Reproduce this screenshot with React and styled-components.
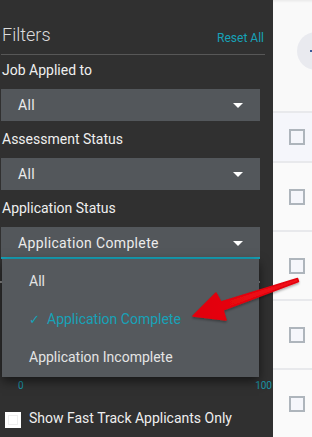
import React from "react";
import styled, { createGlobalStyle } from "styled-components";

const Global = createGlobalStyle`
  html, body { margin: 0; padding: 0; }
  body { font-family: Roboto, "Noto Sans", sans-serif; background: #f8f8f8; }
  * { box-sizing: border-box; }
`;

const Page = styled.div`
  position: relative;
  display: flex;
  width: 312px;
  height: 437px;
  overflow: hidden;
`;

const Sidebar = styled.aside`
  width: 273px;
  flex: none;
  background: #303030;
  padding: 24px 8px 0 1px;
  overflow: hidden;
  display: flex;
  flex-direction: column;
`;

const Header = styled.div`
  display: flex;
  justify-content: space-between;
  align-items: flex-end;
  border-bottom: 1px solid #575757;
  padding: 0 1px 9px 1px;
`;

const Title = styled.h2`
  margin: 0;
  font-size: 18px;
  line-height: 21px;
  font-weight: 300;
  color: #dcdcdc;
`;

const ResetLink = styled.a`
  font-size: 12px;
  line-height: 14px;
  color: #17a2b8;
  text-decoration: none;
`;

const Label = styled.div`
  font-size: 14px;
  line-height: 20px;
  color: #efefef;
  margin: ${(p) => (p.$first ? "5px" : "8px")} 0 9px 1px;
`;

const SelectWrap = styled.div`
  position: relative;
  width: 259px;
`;

const SelectBox = styled.div`
  height: 32px;
  background: #53575b;
  display: flex;
  align-items: center;
  justify-content: space-between;
  padding: 0 17px 0 17px;
  font-size: 14px;
  letter-spacing: 0.35px;
  color: #ececec;
  border-bottom: ${(p) => (p.$open ? "2px solid #17a2b8" : "none")};
  padding-top: ${(p) => (p.$open ? "2px" : "0")};
`;

const Caret = styled.span`
  width: 0;
  height: 0;
  border-left: 5px solid transparent;
  border-right: 5px solid transparent;
  border-top: 5px solid #ffffff;
`;

const Menu = styled.ul`
  position: absolute;
  top: 32px;
  left: 1px;
  right: 1px;
  margin: 0;
  padding: 3px 0 1px;
  list-style: none;
  background: #55595d;
  box-shadow: 0 4px 10px rgba(0, 0, 0, 0.55);
  z-index: 5;
`;

const MenuItem = styled.li`
  height: 38px;
  display: flex;
  align-items: center;
  padding-left: 27px;
  font-size: 14px;
  color: ${(p) => (p.$selected ? "#17a2b8" : "#e4e4e4")};
`;

const Check = styled.span`
  width: 18px;
  font-size: 13px;
`;

const SliderBlock = styled.div`
  margin-top: 22px;
  width: 272px;
  margin-left: -1px;
`;

const Track = styled.div`
  height: 2px;
  width: 260px;
  background: #8a8a8a;
`;

const ChartSpace = styled.div`
  height: 97px;
`;

const Ticks = styled.div`
  display: flex;
  justify-content: space-between;
  padding-left: 18px;
  font-size: 10px;
  line-height: 12px;
  color: #1b95a8;
  white-space: nowrap;
`;

const CheckRow = styled.label`
  display: flex;
  align-items: center;
  gap: 8px;
  margin-top: 20px;
  padding-left: 4px;
  font-size: 14px;
  color: #eeeeee;
`;

const WhiteBox = styled.span`
  width: 16px;
  height: 16px;
  background: #ffffff;
  flex: none;
  position: relative;
  &::after {
    content: "";
    position: absolute;
    inset: 3px;
    border: 1px solid #eeeeee;
  }
`;

const CheckText = styled.span`
  margin-top: -4px;
`;

const Main = styled.main`
  flex: 1;
  background: #f9f9f9;
  display: flex;
  flex-direction: column;
  box-shadow: inset 0 3px 3px -2px rgba(0, 0, 0, 0.08);
`;

const TopBar = styled.div`
  height: 113px;
  padding: 32px 0 0 24px;
`;

const CircleBtn = styled.div`
  width: 38px;
  height: 38px;
  border-radius: 50%;
  background: #e9eaef;
  display: flex;
  align-items: center;
  justify-content: center;
  &::before {
    content: "";
    width: 12px;
    height: 2px;
    background: #3d5a98;
  }
`;

const Row = styled.div`
  flex: none;
  height: ${(p) => p.$h}px;
  border-top: 2px solid #e8e9ec;
  background: ${(p) => (p.$head ? "#f5f6fb" : "#fafafa")};
  display: flex;
  align-items: center;
  padding-left: 16px;
`;

const RowBox = styled.span`
  width: 16px;
  height: 16px;
  border: 2px solid #aeb5bc;
  background: #f5f6fb;
`;

const ArrowSvg = styled.svg`
  position: absolute;
  left: 0;
  top: 0;
  pointer-events: none;
  z-index: 10;
`;

export default function App() {
  const rows = [
    { h: 50, head: true },
    { h: 69 },
    { h: 69 },
    { h: 69 },
    { h: 69 },
  ];
  return (
    <>
      <Global />
      <Page>
        <Sidebar>
          <Header>
            <Title>Filters</Title>
            <ResetLink>Reset All</ResetLink>
          </Header>
          <Label $first>Job Applied to</Label>
          <SelectWrap>
            <SelectBox>
              <span>All</span>
              <Caret />
            </SelectBox>
          </SelectWrap>
          <Label>Assessment Status</Label>
          <SelectWrap>
            <SelectBox>
              <span>All</span>
              <Caret />
            </SelectBox>
          </SelectWrap>
          <Label>Application Status</Label>
          <SelectWrap>
            <SelectBox $open>
              <span>Application Complete</span>
              <Caret />
            </SelectBox>
            <Menu>
              <MenuItem>All</MenuItem>
              <MenuItem $selected>
                <Check>✓</Check>Application Complete
              </MenuItem>
              <MenuItem>Application Incomplete</MenuItem>
            </Menu>
          </SelectWrap>
          <SliderBlock>
            <Track />
            <ChartSpace />
            <Ticks>
              <span>0</span>
              <span>100</span>
            </Ticks>
          </SliderBlock>
          <CheckRow>
            <WhiteBox />
            <CheckText>Show Fast Track Applicants Only</CheckText>
          </CheckRow>
        </Sidebar>
        <Main>
          <TopBar>
            <CircleBtn />
          </TopBar>
          {rows.map((r, i) => (
            <Row key={i} $h={r.h} $head={r.head}>
              <RowBox />
            </Row>
          ))}
        </Main>
        <ArrowSvg width="312" height="437" viewBox="0 0 312 437">
          <defs>
            <linearGradient id="ag" x1="0" y1="0" x2="1" y2="0">
              <stop offset="0" stopColor="#e0000a" />
              <stop offset="1" stopColor="#f2121a" />
            </linearGradient>
            <filter id="sh" x="-20%" y="-50%" width="140%" height="200%">
              <feDropShadow dx="0" dy="1.5" stdDeviation="1.2" floodColor="#000" floodOpacity="0.35" />
            </filter>
          </defs>
          <polygon
            points="193,316 216,293 221,302 297.5,278.5 298.5,281.5 223,310 226,320"
            fill="url(#ag)"
            stroke="#e3000b"
            strokeWidth="1.5"
            strokeLinejoin="round"
            filter="url(#sh)"
          />
        </ArrowSvg>
      </Page>
    </>
  );
}
